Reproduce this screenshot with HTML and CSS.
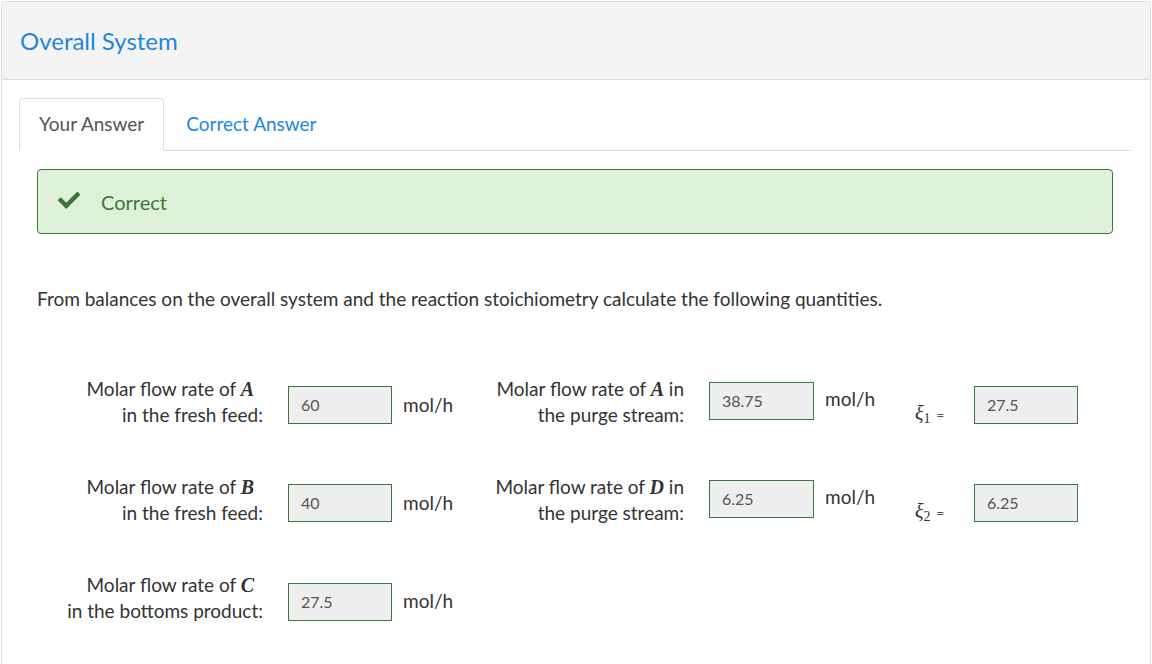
FILE: index.html
```html
<!DOCTYPE html>
<html>
<head>
<meta charset="utf-8">
<link rel="stylesheet" href="styles.css">
</head>
<body>
<div class="panel">
  <div class="panel-heading"><h3 class="panel-title">Overall System</h3></div>
  <div class="panel-body">
    <ul class="tabs">
      <li class="tab active"><span>Your Answer</span></li>
      <li class="tab"><span>Correct Answer</span></li>
    </ul>
    <div class="tab-content">
      <div class="alert">
        <svg class="check" viewBox="0 64 512 384" width="22" height="16.5"><path fill="#3c763d" d="M173.898 439.404l-166.4-166.4c-9.997-9.997-9.997-26.206 0-36.204l36.203-36.204c9.997-9.998 26.207-9.998 36.204 0L192 312.69 432.095 72.596c9.997-9.997 26.207-9.997 36.204 0l36.203 36.204c9.997 9.997 9.997 26.206 0 36.204l-294.4 294.401c-9.998 9.997-26.207 9.997-36.204-.001z"/></svg>
        <span class="alert-text">Correct</span>
      </div>
      <p class="intro">From balances on the overall system and the reaction stoichiometry calculate the following quantities.</p>
      <div class="qgrid">
        <div class="lbl">Molar flow rate of <span class="mv tail">A</span><br>in the fresh feed:</div>
        <div class="inp c1">60</div>
        <div class="unit u1">mol/h</div>
        <div class="lbl">Molar flow rate of <span class="mv">A</span> in<br>the purge stream:</div>
        <div class="inp c2">38.75</div>
        <div class="unit u2">mol/h</div>
        <div class="xi"><span class="xs">ξ</span><sub>1</sub> <span class="eq">=</span></div>
        <div class="inp c3">27.5</div>

        <div class="lbl">Molar flow rate of <span class="mv tail">B</span><br>in the fresh feed:</div>
        <div class="inp c1">40</div>
        <div class="unit u1">mol/h</div>
        <div class="lbl">Molar flow rate of <span class="mv">D</span> in<br>the purge stream:</div>
        <div class="inp c2">6.25</div>
        <div class="unit u2">mol/h</div>
        <div class="xi"><span class="xs">ξ</span><sub>2</sub> <span class="eq">=</span></div>
        <div class="inp c3">6.25</div>

        <div class="lbl">Molar flow rate of <span class="mv tail">C</span><br>in the bottoms product:</div>
        <div class="inp c1 r3">27.5</div>
        <div class="unit u1">mol/h</div>
      </div>
    </div>
  </div>
</div>
</body>
</html>
```
FILE: styles.css
```css
html, body {
  margin: 0;
  padding: 0;
  background: #fff;
}
body {
  font-family: Lato, "Open Sans", sans-serif;
  color: #333;
  overflow: hidden;
}
.panel {
  box-sizing: border-box;
  margin: 1px 0 0 1px;
  width: 1150px;
  height: 663px;
  border: 1px solid #ddd;
  border-bottom: none;
  border-radius: 4px 4px 0 0;
  overflow: hidden;
}
.panel-heading {
  background: #f4f4f4;
  border-bottom: 1px solid #ddd;
  height: 77px;
  padding: 0 18px;
  display: flex;
  align-items: center;
  border-radius: 4px 4px 0 0;
}
.panel-title {
  margin: 0;
  font-weight: 400;
  font-size: 24px;
  color: #1c87dc;
}
.panel-body {
  padding: 18px 19px 0 17px;
}
.tabs {
  list-style: none;
  margin: 0;
  padding: 0;
  display: flex;
  border-bottom: 1px solid #ddd;
}
.tab {
  margin-bottom: -1px;
  margin-right: 2px;
  padding: 14px 19px 15px 19px;
  line-height: 22px;
  font-size: 19px;
  color: #1c87dc;
  border: 1px solid transparent;
  border-radius: 4px 4px 0 0;
}
.tab.active {
  color: #555;
  background: #fff;
  border-color: #ddd #ddd transparent #ddd;
}
.tab-content {
  padding: 18px 18px 0 18px;
}
.alert {
  height: 63px;
  background: #dff0d8;
  border: 1px solid #3c763d;
  border-radius: 4px;
  display: flex;
  align-items: center;
  padding: 0 20px;
  color: #3c763d;
}
.check {
  display: block;
  margin-right: 21px;
  margin-top: -2px;
}
.alert-text {
  font-size: 20px;
}
.intro {
  margin: 53px 0 0 0;
  font-size: 19px;
  line-height: 24px;
}
.qgrid {
  margin-top: 65px;
  display: grid;
  grid-template-columns: 251px 115px 67px 239px 116px 90px 59px 104px;
  grid-auto-rows: 52px;
  row-gap: 46px;
  font-size: 19px;
}
.lbl {
  text-align: right;
  padding-right: 25px;
  line-height: 26px;
}
.mv {
  font-family: "Liberation Serif", "DejaVu Serif", serif;
  font-style: italic;
  font-weight: bold;
  font-size: 20px;
}
.mv.tail {
  margin-right: 9px;
}
.inp {
  box-sizing: border-box;
  height: 38px;
  background: #eee;
  border: 1px solid #3c763d;
  padding: 0 12px;
  line-height: 36px;
  font-size: 16px;
  color: #555;
  align-self: start;
}
.c1 { width: 104px; margin-top: 10px; }
.c2 { width: 105px; margin-top: 6px; }
.c3 { width: 104px; margin-top: 10px; }
.r3 { margin-top: 11px; }
.unit {
  line-height: 24px;
  align-self: start;
}
.u1 { margin-top: 17px; }
.u2 { margin-top: 11px; }
.xi {
  align-self: start;
  margin-top: 27px;
  font-size: 14px;
  line-height: 20px;
  color: #555;
}
.xs {
  font-family: "Liberation Serif", "DejaVu Serif", serif;
  font-style: italic;
  font-size: 20px;
  color: #333;
}
.xi sub {
  font-family: "Liberation Serif", "DejaVu Serif", serif;
  font-size: 14px;
  color: #333;
  vertical-align: -3px;
}
.eq {
  margin-left: 2px;
}
```
